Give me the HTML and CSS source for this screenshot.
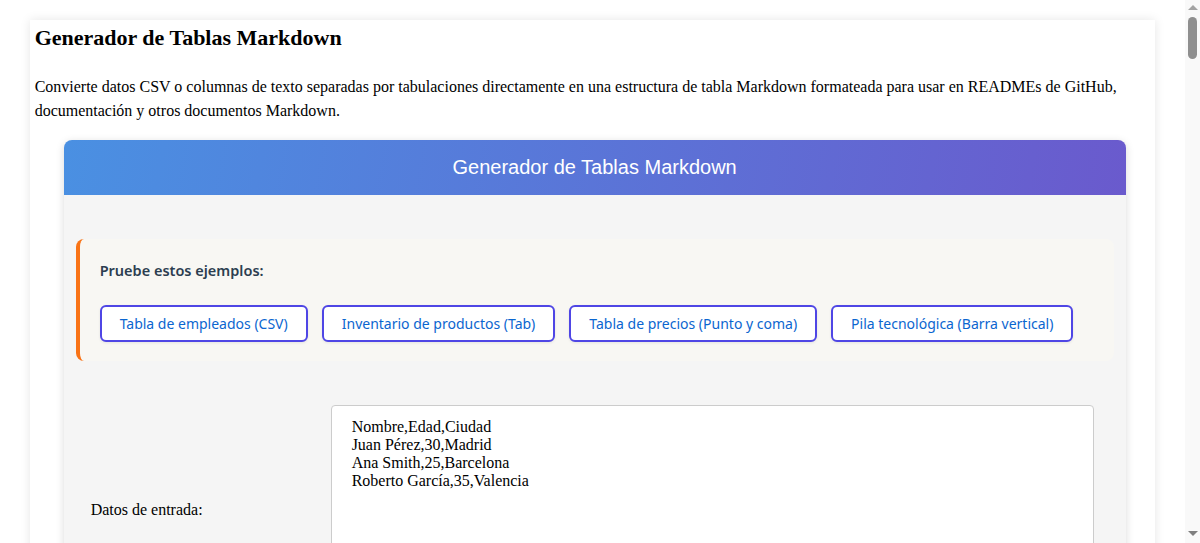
FILE: index.html
```html
<!DOCTYPE html>
<html lang="es">
<head>
<meta charset="utf-8">
<title>Generador de Tablas Markdown</title>
<link rel="stylesheet" href="styles.css">
</head>
<body>
<div class="viewport">
  <div class="page">
    <h1 class="title">Generador de Tablas Markdown</h1>
    <p class="intro">Convierte datos CSV o columnas de texto separadas por tabulaciones directamente en una estructura de tabla Markdown formateada para usar en READMEs de GitHub, documentación y otros documentos Markdown.</p>
    <div class="card">
      <div class="card-head">Generador de Tablas Markdown</div>
      <div class="card-body">
        <div class="examples">
          <div class="examples-label">Pruebe estos ejemplos:</div>
          <div class="examples-buttons">
            <button class="ex-btn">Tabla de empleados (CSV)</button>
            <button class="ex-btn">Inventario de productos (Tab)</button>
            <button class="ex-btn">Tabla de precios (Punto y coma)</button>
            <button class="ex-btn">Pila tecnológica (Barra vertical)</button>
          </div>
        </div>
        <div class="form-row">
          <label class="form-label" for="input">Datos de entrada:</label>
          <textarea id="input" class="input-area">Nombre,Edad,Ciudad
Juan Pérez,30,Madrid
Ana Smith,25,Barcelona
Roberto García,35,Valencia</textarea>
        </div>
        <div class="form-row">
          <label class="form-label" for="delim">Delimitador:</label>
          <select id="delim" class="select"><option>Detectar automáticamente</option></select>
        </div>
      </div>
    </div>
  </div>
</div>
<div class="scrollbar" aria-hidden="true">
  <span class="arrow arrow-up"></span>
  <span class="thumb"></span>
  <span class="track-fill"></span>
  <span class="arrow arrow-down"></span>
</div>
</body>
</html>
```
FILE: styles.css
```css
html, body {
  margin: 0;
  padding: 0;
  background: #ffffff;
}
body {
  display: flex;
  align-items: flex-start;
  height: 543px;
  overflow: hidden;
  font-family: "Liberation Serif", "Times New Roman", serif;
  color: #000;
}
.viewport {
  flex: 1;
  min-width: 0;
  padding-top: 20px;
}
.scrollbar {
  width: 15px;
  height: 543px;
  flex: none;
  background: #f9f9f9;
  display: flex;
  flex-direction: column;
  align-items: center;
}
.arrow {
  width: 0;
  height: 0;
  border-left: 5px solid transparent;
  border-right: 5px solid transparent;
}
.arrow-up {
  margin-top: 5px;
  border-bottom: 5px solid #a3a3a3;
}
.arrow-down {
  margin-bottom: 7px;
  border-top: 5px solid #7f7f7f;
}
.thumb {
  margin-top: 7px;
  width: 9px;
  height: 42px;
  border-radius: 5px;
  background: #8f8f8f;
}
.track-fill {
  flex: 1;
}
.page {
  width: 95%;
  margin: 0 auto 20px;
  padding: 5px;
  box-sizing: border-box;
  background: #fff;
  box-shadow: 0 0 10px rgba(0, 0, 0, 0.1);
}
.title {
  font-size: 22px;
  font-weight: bold;
  margin: 0 0 24px;
}
.intro {
  font-size: 16px;
  line-height: 24px;
  margin: 0 0 17px;
}
.card {
  width: 1062px;
  margin: 0 0 20px 29px;
  border-radius: 8px;
  overflow: hidden;
  box-shadow: 0 2px 8px rgba(0, 0, 0, 0.15);
  background: #f5f5f5;
}
.card-head {
  height: 55px;
  display: flex;
  align-items: center;
  justify-content: center;
  background: linear-gradient(100deg, #4a90e2 0%, #6a5acd 100%);
  color: #fff;
  font-family: "Liberation Sans", Arial, sans-serif;
  font-size: 20px;
}
.card-body {
  padding: 44px 12px 40px;
}
.examples {
  background: #f8f7f3;
  border-left: 4px solid #f97316;
  border-radius: 8px;
  padding: 20px 20px 19px;
  font-family: "Noto Sans", "Liberation Sans", sans-serif;
}
.examples-label {
  font-size: 14.5px;
  font-weight: 600;
  color: #2c3e50;
  line-height: 22px;
}
.examples-buttons {
  display: flex;
  gap: 14px;
  margin-top: 24px;
}
.ex-btn {
  height: 37px;
  padding: 0 18px;
  background: #fff;
  border: 2px solid #4f46e5;
  border-radius: 6px;
  color: #0b66d0;
  font-family: "Noto Sans", "Liberation Sans", sans-serif;
  font-size: 14px;
  box-shadow: 0 1px 3px rgba(0, 0, 0, 0.08);
  cursor: pointer;
}
.form-row {
  display: grid;
  grid-template-columns: 255px 763px;
  align-items: center;
  margin-top: 44px;
}
.form-label {
  padding-left: 15px;
  font-size: 16px;
}
.input-area {
  height: 210px;
  box-sizing: border-box;
  padding: 12px 20px;
  border: 1px solid #ccc;
  border-radius: 4px;
  background: #fff;
  font-family: "Liberation Serif", "Times New Roman", serif;
  font-size: 16px;
  resize: none;
}
.select {
  height: 36px;
  font-size: 16px;
  border: 1px solid #ccc;
  border-radius: 4px;
  background: #fff;
}
```
